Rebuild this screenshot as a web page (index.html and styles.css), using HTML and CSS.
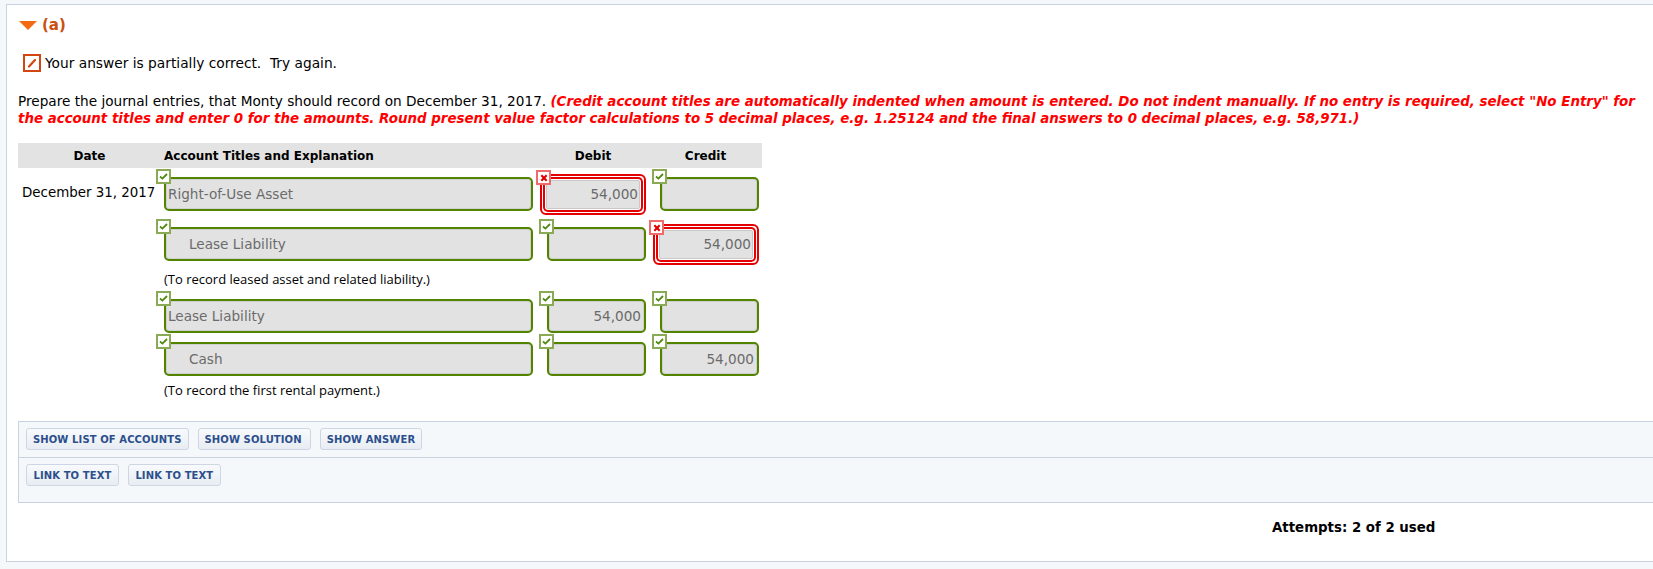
FILE: index.html
```html
<!DOCTYPE html>
<html lang="en">
<head>
    <meta charset="UTF-8">
    <title>Question (a)</title>
    <link rel="stylesheet" href="styles.css">
</head>
<body>
    <div class="panel">
        <div class="part-head">
            <svg class="caret" width="18" height="9" viewBox="0 0 18 9"><path d="M0 0H18L9 9Z" fill="#f26a12"/></svg>
            <span class="part-label">(a)</span>
        </div>

        <div class="status">
            <span class="status-icon">
                <svg width="12" height="12" viewBox="0 0 12 12"><path d="M3 9.5L9 3" stroke="#d2470f" stroke-width="2.2" stroke-linecap="round"/></svg>
            </span>
            <span>Your answer is partially correct.&nbsp; Try again.</span>
        </div>

        <p class="prompt">Prepare the journal entries, that Monty should record on December 31, 2017. <em>(Credit account titles are automatically indented when amount is entered. Do not indent manually. If no entry is required, select "No Entry" for the account titles and enter 0 for the amounts. Round present value factor calculations to 5 decimal places, e.g. 1.25124 and the final answers to 0 decimal places, e.g. 58,971.)</em></p>

        <div class="journal">
            <div class="journal-head">
                <div class="head-date">Date</div>
                <div class="head-account">Account Titles and Explanation</div>
                <div class="head-num">Debit</div>
                <div class="head-num">Credit</div>
            </div>

            <div class="row row-1">
                <div class="date">December 31, 2017</div>
                <div class="field account"><span class="badge ok"><svg width="9" height="7" viewBox="0 0 9 7"><path d="M1 3.5L3.4 5.6L8 1" fill="none" stroke="#4f8a10" stroke-width="1.8"/></svg></span>Right-of-Use Asset</div>
                <div class="field wrong num"><span class="badge bad"><svg width="8" height="8" viewBox="0 0 9 9"><path d="M1.5 1.5L7.5 7.5M7.5 1.5L1.5 7.5" stroke="#e00000" stroke-width="2.4"/></svg></span><span class="inner">54,000</span></div>
                <div class="field num"><span class="badge ok"><svg width="9" height="7" viewBox="0 0 9 7"><path d="M1 3.5L3.4 5.6L8 1" fill="none" stroke="#4f8a10" stroke-width="1.8"/></svg></span></div>
            </div>
            <div class="row row-2">
                <div class="date"></div>
                <div class="field account indent"><span class="badge ok"><svg width="9" height="7" viewBox="0 0 9 7"><path d="M1 3.5L3.4 5.6L8 1" fill="none" stroke="#4f8a10" stroke-width="1.8"/></svg></span>Lease Liability</div>
                <div class="field num"><span class="badge ok"><svg width="9" height="7" viewBox="0 0 9 7"><path d="M1 3.5L3.4 5.6L8 1" fill="none" stroke="#4f8a10" stroke-width="1.8"/></svg></span></div>
                <div class="field wrong num"><span class="badge bad"><svg width="8" height="8" viewBox="0 0 9 9"><path d="M1.5 1.5L7.5 7.5M7.5 1.5L1.5 7.5" stroke="#e00000" stroke-width="2.4"/></svg></span><span class="inner">54,000</span></div>
            </div>
            <div class="note note-1">(To record leased asset and related liability.)</div>
            <div class="row row-3">
                <div class="date"></div>
                <div class="field account"><span class="badge ok"><svg width="9" height="7" viewBox="0 0 9 7"><path d="M1 3.5L3.4 5.6L8 1" fill="none" stroke="#4f8a10" stroke-width="1.8"/></svg></span>Lease Liability</div>
                <div class="field num"><span class="badge ok"><svg width="9" height="7" viewBox="0 0 9 7"><path d="M1 3.5L3.4 5.6L8 1" fill="none" stroke="#4f8a10" stroke-width="1.8"/></svg></span>54,000</div>
                <div class="field num"><span class="badge ok"><svg width="9" height="7" viewBox="0 0 9 7"><path d="M1 3.5L3.4 5.6L8 1" fill="none" stroke="#4f8a10" stroke-width="1.8"/></svg></span></div>
            </div>
            <div class="row row-4">
                <div class="date"></div>
                <div class="field account indent"><span class="badge ok"><svg width="9" height="7" viewBox="0 0 9 7"><path d="M1 3.5L3.4 5.6L8 1" fill="none" stroke="#4f8a10" stroke-width="1.8"/></svg></span>Cash</div>
                <div class="field num"><span class="badge ok"><svg width="9" height="7" viewBox="0 0 9 7"><path d="M1 3.5L3.4 5.6L8 1" fill="none" stroke="#4f8a10" stroke-width="1.8"/></svg></span></div>
                <div class="field num"><span class="badge ok"><svg width="9" height="7" viewBox="0 0 9 7"><path d="M1 3.5L3.4 5.6L8 1" fill="none" stroke="#4f8a10" stroke-width="1.8"/></svg></span>54,000</div>
            </div>
            <div class="note note-2">(To record the first rental payment.)</div>
        </div>

        <div class="toolbar">
            <div class="tool-row">
                <button class="tool-btn">Show List of Accounts</button>
                <button class="tool-btn tool-btn-wide">Show Solution</button>
                <button class="tool-btn">Show Answer</button>
            </div>
            <div class="tool-row tool-row-links">
                <button class="tool-btn">Link to Text</button>
                <button class="tool-btn">Link to Text</button>
            </div>
        </div>

        <div class="attempts">Attempts: 2 of 2 used</div>
    </div>
</body>
</html>
```

FILE: styles.css
```css
html, body {
    height: 100%;
}
body {
    margin: 0;
    padding: 4px 0 0 6px;
    box-sizing: border-box;
    overflow: hidden;
    background: #f5f8fb;
    color: #000;
    font-family: "DejaVu Sans", Verdana, sans-serif;
    font-size: 13.6px;
}
.panel {
    height: 558px;
    box-sizing: border-box;
    background: #fff;
    border: 1px solid #c9d2e1;
    border-right: none;
    padding: 0 0 0 11px;
}
.part-head {
    display: flex;
    align-items: center;
    gap: 5px;
    height: 20px;
    margin-top: 10px;
    margin-left: 1px;
}
.part-label {
    color: #c9500f;
    font-weight: bold;
    font-size: 15px;
}
.status {
    display: flex;
    align-items: center;
    gap: 4px;
    margin: 18px 0 0 5px;
    height: 19px;
    font-size: 13.75px;
}
.status-icon {
    width: 14px;
    height: 14px;
    border: 2px solid #d2470f;
    display: flex;
    align-items: center;
    justify-content: center;
}
.prompt {
    margin: 21px 10px 0 0;
    font-size: 13.65px;
    line-height: 17px;
}
.prompt em {
    color: #f00;
    font-weight: bold;
    font-size: 13.4px;
}
.journal {
    margin-top: 16px;
    width: 744px;
}
.journal-head {
    display: grid;
    grid-template-columns: 146px 369px 120px 105px;
    height: 25px;
    align-items: center;
    background: #e3e3e3;
    font-size: 12px;
    font-weight: bold;
}
.head-date {
    text-align: center;
    padding-right: 3px;
}
.head-num {
    text-align: center;
}
.row {
    display: grid;
    grid-template-columns: 146px 383px 113px 99px;
    height: 34px;
}
.row-1 {
    margin-top: 9px;
}
.row-2 {
    margin-top: 16px;
}
.row-3 {
    margin-top: 11px;
}
.row-4 {
    margin-top: 9px;
}
.date {
    padding: 8px 0 0 4px;
    font-size: 13.4px;
    white-space: nowrap;
}
.field {
    position: relative;
    box-sizing: border-box;
    height: 34px;
    background: #e2e2e2;
    border: 2px solid #528400;
    border-radius: 5px;
    box-shadow: inset 0 0 0 1px #d0d0d0;
    color: #6b6b6b;
    line-height: 30px;
    padding: 0 3px 0 2px;
}
.account {
    width: 369px;
}
.indent {
    padding-left: 23px;
}
.num {
    text-align: right;
    width: 99px;
}
.wrong {
    margin: -3px 0 0 -7px;
    width: 106px;
    height: 41px;
    border: 2px solid #e40000;
    padding: 4px;
    background: #fff;
    border-radius: 6px;
    box-shadow: none;
}
.wrong .inner {
    display: block;
    height: 29px;
    line-height: 27px;
    background: #e2e2e2;
    border: 1px solid #c8c8c8;
    border-radius: 2px;
    box-sizing: border-box;
    padding-right: 1px;
    box-shadow: 0 0 0 1px #fff, 0 0 0 3px #e40000;
}
.badge {
    position: absolute;
    left: -10px;
    top: -10px;
    width: 15px;
    height: 15px;
    box-sizing: border-box;
    display: flex;
    align-items: center;
    justify-content: center;
    background: #fff;
}
.ok {
    border: 2px solid #8aaa55;
}
.bad {
    left: -6px;
    top: -6px;
    border: 2px solid #ef6a6a;
    z-index: 1;
}
.note {
    margin-left: 146px;
    font-family: "Open Sans", sans-serif;
    font-size: 13px;
    line-height: 18px;
}
.note-1 {
    margin-top: 9px;
}
.note-2 {
    margin-top: 5px;
}
.toolbar {
    margin-top: 22px;
    background: #f5f8fb;
    border: 1px solid #c9d2e1;
    border-right: none;
}
.tool-row {
    display: flex;
    gap: 9px;
    height: 35px;
    padding: 6px 0 0 7px;
    box-sizing: border-box;
}
.tool-row-links {
    height: 45px;
    border-top: 1px solid #c9d2e1;
}
.tool-row-links .tool-btn {
    padding: 0 6.5px;
}
.tool-btn {
    height: 22px;
    padding: 0 6px;
    background: linear-gradient(#f8fafc, #e8edf3);
    border: 1px solid #cdd6e2;
    border-radius: 3px;
    color: #2c4f8c;
    font-family: inherit;
    font-size: 10px;
    font-weight: bold;
    text-transform: uppercase;
    letter-spacing: 0.1px;
}
.tool-btn-wide {
    padding-right: 8px;
}
.attempts {
    margin: 17px 0 0 1254px;
    font-size: 13.35px;
    font-weight: bold;
    white-space: nowrap;
}
```
